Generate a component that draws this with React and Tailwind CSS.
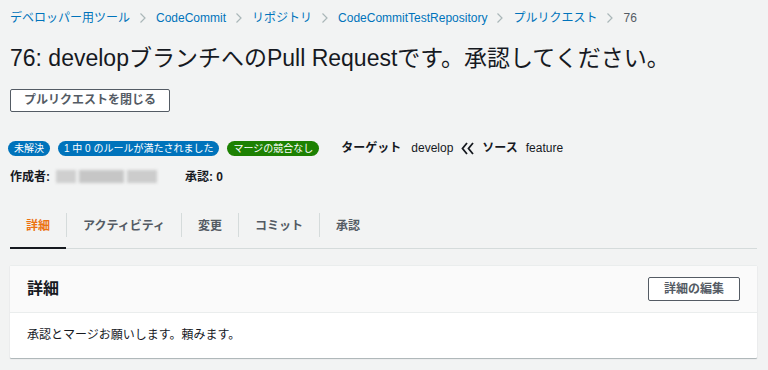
import React from "react";

const font = { fontFamily: '"Liberation Sans", "Noto Sans CJK JP", sans-serif' };

function Chevron() {
  return (
    <svg width="8" height="12" viewBox="0 0 8 12" className="mx-[9px]">
      <path d="M1.5 1.5 L6 6 L1.5 10.5" fill="none" stroke="#aab7b8" strokeWidth="1.2" />
    </svg>
  );
}

function DoubleChevron() {
  return (
    <svg width="13" height="13" viewBox="0 0 13 13">
      <path d="M6 1 L1.5 6.5 L6 12 M12 1 L7.5 6.5 L12 12" fill="none" stroke="#16191f" strokeWidth="1.8" />
    </svg>
  );
}

export default function App() {
  const crumbs = ["デベロッパー用ツール", "CodeCommit", "リポジトリ", "CodeCommitTestRepository", "プルリクエスト"];
  const tabs = ["詳細", "アクティビティ", "変更", "コミット", "承認"];
  return (
    <div style={font} className="w-[768px] h-[370px] overflow-hidden bg-[#f2f3f3] pl-[10px] pr-[11px] text-[#16191f]">
      <div className="pt-[10px] flex items-center h-[26px] text-[12px] leading-[16px]">
        {crumbs.map((c) => (
          <React.Fragment key={c}>
            <span className="text-[#0073bb]">{c}</span>
            <Chevron />
          </React.Fragment>
        ))}
        <span className="text-[#545b64]">76</span>
      </div>
      <h1 className="mt-[16px] h-[32px] text-[23px] leading-[32px] font-normal text-[#16191f] whitespace-nowrap">
        76: developブランチへのPull Requestです。承認してください。
      </h1>
      <div className="mt-[13px]">
        <button className="w-[160px] h-[23px] border border-[#545b64] rounded-[2px] bg-white text-[12px] font-bold text-[#545b64] leading-[20px]">
          プルリクエストを閉じる
        </button>
      </div>
      <div className="mt-[29px] flex items-center h-[15px] text-[10px] leading-[15px]">
        <span className="-ml-[2px] px-[6px] rounded-full bg-[#0073bb] text-white">未解決</span>
        <span className="ml-[8px] px-[6px] rounded-full bg-[#0073bb] text-white">1 中 0 のルールが満たされました</span>
        <span className="ml-[8px] px-[6px] rounded-full bg-[#1d8102] text-white">マージの競合なし</span>
        <div className="ml-[22px] flex items-center gap-[8px] text-[12px] text-[#16191f]">
          <span className="font-bold">ターゲット</span>
          <span className="ml-[2px]">develop</span>
          <DoubleChevron />
          <span className="font-bold">ソース</span>
          <span>feature</span>
        </div>
      </div>
      <div className="mt-[13px] flex items-center h-[16px] text-[12px] leading-[16px]">
        <span className="font-bold">作成者:</span>
        <div className="ml-[6px] w-[103px] h-[13px] flex gap-[3px] blur-[1.5px]">
          <div className="w-[20px] bg-[#cfcfcf]"></div>
          <div className="w-[45px] bg-[#c6c6c6]"></div>
          <div className="w-[30px] bg-[#cccccc]"></div>
        </div>
        <span className="ml-[26px] font-bold">承認: 0</span>
      </div>
      <div className="mt-[18px] flex items-center border-b border-[#d5dbdb] text-[12px] leading-[16px]">
        {tabs.map((t, i) => (
          <React.Fragment key={t}>
            {i > 0 && <div className="w-px h-[24px] bg-[#d5dbdb]"></div>}
            <div
              className={
                i === 0
                  ? "px-[16px] pt-[15px] pb-[13px] border-b-2 border-[#16191f] -mb-px text-[#ec7211] font-bold"
                  : "px-[16px] pt-[15px] pb-[14px] text-[#545b64] font-bold"
              }
            >
              {t}
            </div>
          </React.Fragment>
        ))}
      </div>
      <div className="mt-[16px] bg-white border-t border-[#eaeded] shadow-[0_1px_1px_0_rgba(0,28,36,0.3)] rounded-[1px]">
        <div className="h-[47px] bg-[#fafafa] border-b border-[#eaeded] flex items-center justify-between pl-[17px] pr-[17px]">
          <span className="text-[16px] font-bold">詳細</span>
          <button className="w-[92px] h-[24px] border border-[#545b64] rounded-[2px] bg-white text-[12px] font-bold text-[#545b64]">
            詳細の編集
          </button>
        </div>
        <div className="h-[45px] flex items-center pl-[17px] text-[12px] text-[#16191f]">
          承認とマージお願いします。頼みます。
        </div>
      </div>
    </div>
  );
}
